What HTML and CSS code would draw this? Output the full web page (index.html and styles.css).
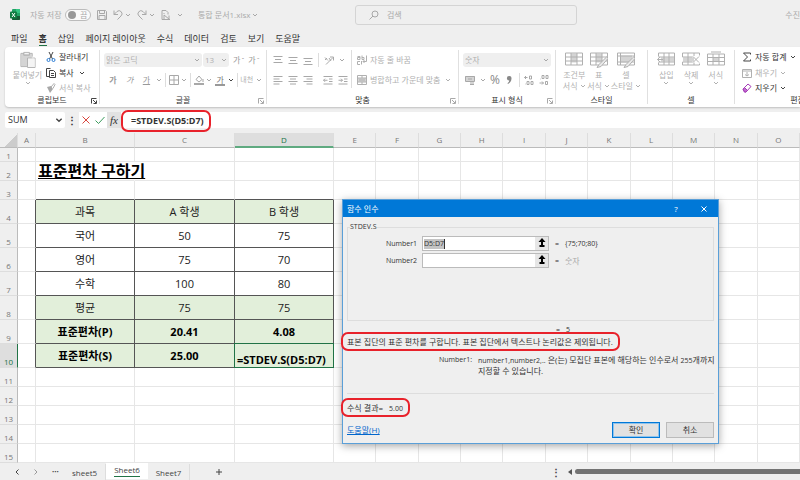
FILE: index.html
```html
<!DOCTYPE html>
<html lang="ko">
<head>
    <meta charset="UTF-8">
    <meta name="viewport" content="width=device-width, initial-scale=1.0">
    <title>통합 문서1.xlsx</title>
    <link rel="stylesheet" href="styles.css">
</head>
<body>
    <!-- 공용 아이콘 -->
    <svg class="sprite" aria-hidden="true">
        <symbol id="chev" viewBox="0 0 6 6"><path d="M1 2l2 2 2-2"/></symbol>
        <symbol id="launcher" viewBox="0 0 6 6"><path d="M.5 5.500v-5h5M2 2l3 3M5.500 2.500v3h-3"/></symbol>
        <symbol id="grid" viewBox="0 0 18 16"><path class="fill" d="M6 2h6v9H6z"/><path d="M.5 1.500h17v12H.5zM.5 5.500h17M.5 9.500h17M6 1.500v12M12 1.500v12"/></symbol>
        <symbol id="up" viewBox="0 0 8 10"><path d="M4 0L0.500 4H3v3H1.500v2h5V7H5V4h2.500z"/></symbol>
    </svg>

    <!-- 제목 표시줄 -->
    <header class="title-bar">
        <svg class="logo" viewBox="0 0 10 11"><rect x="2" width="8" height="11" rx="1" fill="#21a366"/><path d="M6 0h3a1 1 0 0 1 1 1v3H6z" fill="#33c481"/><path d="M2 7h8v3a1 1 0 0 1-1 1H3a1 1 0 0 1-1-1z" fill="#185c37"/><rect y="2.500" width="7" height="7" rx="1" fill="#107c41"/><path d="M2 4l3 4M5 4L2 8" stroke="#fff"/></svg>
        <span class="autosave">자동 저장</span>
        <button class="toggle" aria-label="자동 저장"><i></i>끔</button>
        <div class="quick">
            <svg class="icon" viewBox="0 0 10 10"><path d="M.5.500h8l1 1v8h-9zM2.500.500v3h5v-3M2 9.500v-4h6v4"/></svg>
            <svg class="icon" viewBox="0 0 10 10"><path d="M1 .5v4h4M1 4.500L4 1.500a3 3 0 0 1 4 4.500L4.500 9.500"/></svg>
            <svg class="chev"><use href="#chev"/></svg>
            <svg class="icon" viewBox="0 0 10 10"><path d="M9 .5v4H5M9 4.500L6 1.500A3 3 0 0 0 2 6l3.500 3.500"/></svg>
            <svg class="chev"><use href="#chev"/></svg>
            <svg class="icon" viewBox="0 0 10 10"><path d="M1 9.500v-9h4l2 2v2M1 9.500h8M3 9V5l5 4V5.500M3 3v1"/></svg>
            <svg class="chev"><use href="#chev"/></svg>
        </div>
        <button class="doc-name">통합 문서1.xlsx <svg class="chev"><use href="#chev"/></svg></button>
        <label class="search">
            <svg class="icon" viewBox="0 0 10 10"><circle cx="6" cy="4" r="3"/><path d="M4 6L.5 9.500"/></svg>
            <input type="text" placeholder="검색" aria-label="검색">
        </label>
        <span class="user">수진</span>
    </header>

    <!-- 리본 탭 -->
    <nav class="tabs">
        <a href="#file">파일</a>
        <a href="#home" class="active">홈</a>
        <a href="#insert">삽입</a>
        <a href="#layout">페이지 레이아웃</a>
        <a href="#formula">수식</a>
        <a href="#data">데이터</a>
        <a href="#review">검토</a>
        <a href="#view">보기</a>
        <a href="#help">도움말</a>
    </nav>

    <!-- 리본 메뉴 -->
    <section class="ribbon">
        <div class="group clipboard">
            <div class="group-body">
                <button class="big off">
                    <svg class="icon-l" viewBox="0 0 18 18"><path class="fill" d="M2 3h11v13H2z"/><path d="M5 2.500H1.500v14H8M10 2.500h3.500V6M4.500 1.500h6v3h-6zM8.500 7.500h8v10h-8z"/><path class="paper" d="M9 8h7v9H9z"/></svg>
                    붙여넣기
                    <svg class="chev"><use href="#chev"/></svg>
                </button>
                <div class="stack">
                    <button><svg class="icon dark" viewBox="0 0 10 10"><path d="M3 0l3.500 7M7 0L3.500 7"/><circle class="blue" cx="2.500" cy="8" r="1.500"/><circle class="blue" cx="7.500" cy="8" r="1.500"/></svg>잘라내기</button>
                    <button><svg class="icon dark" viewBox="0 0 10 10"><path d="M3 8.500H.5v-8h4M3.500 2.500h4l2 2v5h-6zM5 5.500h3M5 7.500h3"/></svg>복사 <svg class="chev dark far"><use href="#chev"/></svg></button>
                    <button class="off"><svg class="icon" viewBox="0 0 10 10"><path class="solid" d="M1 4l4-1 2 3-3 4z"/><path d="M5 4l3-3.500 1 1L7 5.500"/></svg>서식 복사</button>
                </div>
            </div>
            <footer>클립보드<svg class="launch dark"><use href="#launcher"/></svg></footer>
        </div>

        <div class="group font">
            <div class="group-body rows">
                <div class="row">
                    <label class="combo wide"><select aria-label="글꼴"><option>맑은 고딕</option></select><svg class="chev"><use href="#chev"/></svg></label>
                    <label class="combo size"><select aria-label="글꼴 크기"><option>13</option></select><svg class="chev"><use href="#chev"/></svg></label>
                    <button class="ga">가<sup>ˆ</sup></button>
                    <button class="ga">가<sup>ˇ</sup></button>
                </div>
                <div class="row letters">
                    <button class="ga bold">가</button>
                    <button class="ga italic">가</button>
                    <button class="ga under">가</button>
                    <svg class="chev"><use href="#chev"/></svg>
                    <i class="bar"></i>
                    <svg class="icon" viewBox="0 0 10 10"><path d="M.5.500h9v9h-9zM5 .5v9M.5 5h9"/></svg>
                    <svg class="chev"><use href="#chev"/></svg>
                    <i class="bar"></i>
                    <svg class="icon" viewBox="0 0 10 10"><path d="M2 4.500L5 1l3 3.500-3 2.500zM9 4v3"/><path class="solid" d="M0 8h10v2H0z"/></svg>
                    <svg class="chev"><use href="#chev"/></svg>
                    <button class="ga color">가</button>
                    <svg class="chev dark"><use href="#chev"/></svg>
                    <i class="bar"></i>
                    <button class="ruby">내천</button>
                    <svg class="chev"><use href="#chev"/></svg>
                </div>
            </div>
            <footer>글꼴<svg class="launch"><use href="#launcher"/></svg></footer>
        </div>

        <div class="group align">
            <div class="group-body">
                <div class="rows">
                    <div class="row">
                        <svg class="icon" viewBox="0 0 10 10"><path d="M.5 1.500h9M2 4.500h6M.5 7.500h9"/></svg>
                        <svg class="icon" viewBox="0 0 10 10"><path d="M.5 2.500h9M2 5.500h6M.5 8.500h9"/></svg>
                        <svg class="icon" viewBox="0 0 10 10"><path d="M.5 3.500h9M2 6.500h6M.5 9.500h9"/></svg>
                        <i class="bar"></i>
                        <svg class="icon" viewBox="0 0 10 10"><path d="M2 9.500l7-7M6 2h3.500v3.500M1 2.500l3 3M1 5l2-2M5 3l2 3"/></svg>
                        <svg class="chev"><use href="#chev"/></svg>
                    </div>
                    <div class="row">
                        <svg class="icon" viewBox="0 0 10 10"><path d="M.5 1.500h9M.5 4h6M.5 6.500h9M.5 9h6"/></svg>
                        <svg class="icon" viewBox="0 0 10 10"><path d="M.5 1.500h9M2 4h6M.5 6.500h9M2 9h6"/></svg>
                        <svg class="icon" viewBox="0 0 10 10"><path d="M.5 1.500h9M3.500 4h6M.5 6.500h9M3.500 9h6"/></svg>
                        <i class="bar"></i>
                        <svg class="icon" viewBox="0 0 10 10"><path d="M.5 1.500h9M6 4h3.500M6 6.500h3.500M.5 9h9M4.500 5.250h-4M2 3.700L.5 5.250 2 6.800"/></svg>
                        <svg class="icon" viewBox="0 0 10 10"><path d="M.5 1.500h9M6 4h3.500M6 6.500h3.500M.5 9h9M.5 5.250h4M3 3.700l1.500 1.550L3 6.800"/></svg>
                    </div>
                </div>
                <i class="bar tall"></i>
                <div class="rows">
                    <button class="off"><svg class="icon" viewBox="0 0 10 10"><path d="M.5 1.500H3v3H.5v-2H3M5 .5v4h2v-2H5M9.500.500v6H6M7.500 5L6 6.500 7.500 8M3 6.500H.5v3H3M4.500 6v3.500"/></svg>자동 줄 바꿈</button>
                    <button class="off"><svg class="icon" viewBox="0 0 10 10"><path class="fill" d="M1 3h8v4H1z"/><path d="M.5.500h9v9h-9zM.5 3h9M.5 7h9M5 .5V3M5 7v2.500M2 5h6"/></svg>병합하고 가운데 맞춤 <svg class="chev far"><use href="#chev"/></svg></button>
                </div>
            </div>
            <footer>맞춤<svg class="launch"><use href="#launcher"/></svg></footer>
        </div>

        <div class="group number">
            <div class="group-body rows">
                <label class="combo full"><select aria-label="표시 형식"><option>숫자</option></select><svg class="chev"><use href="#chev"/></svg></label>
                <div class="row">
                    <svg class="icon" viewBox="0 0 10 10"><path class="fill" d="M0 1h10v5H0z"/><path d="M.5 1.500h9v5h-9zM3 4h4M5 8h4M5 9.500h4"/></svg>
                    <svg class="chev"><use href="#chev"/></svg>
                    <button class="sign">%</button>
                    <button aria-label="쉼표 스타일"><svg class="icon" viewBox="0 0 10 10"><path class="comma" d="M5 1a2.300 2.300 0 0 1 2.500 2.500C7.500 6 6 8 4 9l-.5-.8C4.600 7.400 5.200 6.500 5.300 5.500A2.200 2.200 0 0 1 5 1z"/></svg></button>
                    <i class="bar"></i>
                    <button class="dec" aria-label="자릿수 늘림"><svg class="icon" viewBox="0 0 10 10"><path d="M3.500 2.500h-3M2 1L.5 2.500 2 4M5.500 1h2v3h-2zM1 9h.5M3 6.500h2v3H3zM7 6.500h2v3H7z"/></svg></button>
                    <button class="dec" aria-label="자릿수 줄임"><svg class="icon" viewBox="0 0 10 10"><path d="M1 4h.5M3 .5h2v3H3zM7 .5h2v3H7zM.5 8h4M3 6.500L4.500 8 3 9.500M6.500 6.500h2v3h-2z"/></svg></button>
                </div>
            </div>
            <footer>표시 형식<svg class="launch"><use href="#launcher"/></svg></footer>
        </div>

        <div class="group styles">
            <div class="group-body">
                <button class="big off"><svg class="icon-l" viewBox="0 0 18 16"><use href="#grid" width="18" height="16"/></svg>조건부<span>서식 <svg class="chev"><use href="#chev"/></svg></span></button>
                <button class="big off"><svg class="icon-l" viewBox="0 0 18 16"><use href="#grid" width="18" height="16"/><path class="brush" d="M17 5l-8 8-2 3 4-1 7-8z"/></svg>표<span>서식 <svg class="chev"><use href="#chev"/></svg></span></button>
                <button class="big off"><svg class="icon-l" viewBox="0 0 18 16"><path class="fill" d="M3 4h12v7H3z"/><path d="M.5 1.500h17v12H.5zM.5 4.500h17M.5 10.500h17M3.500 1.500v12"/><path class="brush" d="M17 5l-8 8-2 3 4-1 7-8z"/></svg>셀<span>스타일 <svg class="chev"><use href="#chev"/></svg></span></button>
            </div>
            <footer>스타일</footer>
        </div>

        <div class="group cells">
            <div class="group-body">
                <button class="big off"><svg class="icon-l" viewBox="0 0 18 16"><path class="fill" d="M4 6h14v4H4z"/><path d="M1.500 5V1.500h16v12h-16V11M1.500 5.500h16M1.500 10.500h16M7 1.500v12M12 1.500v12M6 8H.5M3 5.500L.5 8 3 10.500"/></svg>삽입<svg class="chev"><use href="#chev"/></svg></button>
                <button class="big off"><svg class="icon-l" viewBox="0 0 18 16"><path class="fill" d="M1 6h11v4H1z"/><path d="M17.500 4V1.500H.5v4h10M.5 10.500v3h17V12M.5 10.500h10M6 1.500v12M12 1.500v3M12 11v2.500M11 5l6 6M17 5l-6 6"/></svg>삭제<svg class="chev"><use href="#chev"/></svg></button>
                <button class="big off"><svg class="icon-l" viewBox="0 0 18 16"><path class="fill" d="M6 6h6v4H6z"/><path d="M4 .5h10M.5 2.500h17v11H.5zM.5 6h17M.5 10h17M6 2.500v11M12 2.500v11"/></svg>서식<svg class="chev"><use href="#chev"/></svg></button>
            </div>
            <footer>셀</footer>
        </div>

        <div class="group edit">
            <div class="group-body">
                <div class="stack">
                    <button><svg class="icon dark" viewBox="0 0 10 10"><path d="M8.500 2.500V1h-7l4 4-4 4h7V7.500"/></svg>자동 합계 <svg class="chev dark"><use href="#chev"/></svg></button>
                    <button class="off"><svg class="icon" viewBox="0 0 10 10"><path d="M.5 1.500h9v8h-9zM.5 3h9M5 4v4M3 6.500l2 1.500 2-1.500"/></svg>채우기<svg class="chev"><use href="#chev"/></svg></button>
                    <button><svg class="icon" viewBox="0 0 10 10"><path class="eraser" d="M1 6l5-5 3 2.500-5 5.500H2.500z"/><path class="eraser-end" d="M1 6l1.500-1.500 3 3L4 9H2.500z"/></svg>지우기<svg class="chev dark"><use href="#chev"/></svg></button>
                </div>
            </div>
            <footer>편집</footer>
        </div>
    </section>

    <!-- 수식 입력줄 -->
    <section class="formula-bar">
        <label class="name-box"><select aria-label="이름 상자"><option>SUM</option></select><svg class="chev dark"><use href="#chev"/></svg></label>
        <span class="dots">⋮</span>
        <div class="formula-buttons">
            <button aria-label="취소"><svg class="icon red" viewBox="0 0 10 10"><path d="M1.500 1.500l7 7M8.500 1.500l-7 7"/></svg></button>
            <button aria-label="입력"><svg class="icon green" viewBox="0 0 10 10"><path d="M.5 5.500l3 3 6-6.500"/></svg></button>
            <button class="fx">fx</button>
        </div>
        <div class="formula">
            <input type="text" value="=STDEV.S(D5:D7)" aria-label="수식">
            <span class="mark"></span>
        </div>
    </section>

    <!-- 워크시트 -->
    <main class="sheet">
        <table class="grid">
            <colgroup>
                <col class="c-head"><col class="c-a"><col class="c-data"><col class="c-c"><col class="c-data">
                <col span="11">
            </colgroup>
            <thead>
                <tr><th class="corner"></th><th>A</th><th>B</th><th>C</th><th class="on">D</th><th>E</th><th>F</th><th>G</th><th>H</th><th>I</th><th>J</th><th>K</th><th>L</th><th>M</th><th>N</th><th>O</th></tr>
            </thead>
            <tbody>
                <tr class="first"><th>1</th><td></td><td></td><td></td><td></td><td></td><td></td><td></td><td></td><td></td><td></td><td></td><td></td><td></td><td></td><td></td></tr>
                <tr><th>2</th><td></td><td class="heading">표준편차 구하기</td><td></td><td></td><td></td><td></td><td></td><td></td><td></td><td></td><td></td><td></td><td></td><td></td><td></td></tr>
                <tr class="before"><th>3</th><td></td><td></td><td></td><td></td><td></td><td></td><td></td><td></td><td></td><td></td><td></td><td></td><td></td><td></td><td></td></tr>
                <tr class="data shade"><th>4</th><td></td><td>과목</td><td>A 학생</td><td>B 학생</td><td></td><td></td><td></td><td></td><td></td><td></td><td></td><td></td><td></td><td></td><td></td></tr>
                <tr class="data"><th>5</th><td></td><td>국어</td><td>50</td><td>75</td><td></td><td></td><td></td><td></td><td></td><td></td><td></td><td></td><td></td><td></td><td></td></tr>
                <tr class="data"><th>6</th><td></td><td>영어</td><td>75</td><td>70</td><td></td><td></td><td></td><td></td><td></td><td></td><td></td><td></td><td></td><td></td><td></td></tr>
                <tr class="data"><th>7</th><td></td><td>수학</td><td>100</td><td>80</td><td></td><td></td><td></td><td></td><td></td><td></td><td></td><td></td><td></td><td></td><td></td></tr>
                <tr class="data shade"><th>8</th><td></td><td>평균</td><td>75</td><td>75</td><td></td><td></td><td></td><td></td><td></td><td></td><td></td><td></td><td></td><td></td><td></td></tr>
                <tr class="data shade strong"><th>9</th><td></td><td>표준편차(P)</td><td>20.41</td><td>4.08</td><td></td><td></td><td></td><td></td><td></td><td></td><td></td><td></td><td></td><td></td><td></td></tr>
                <tr class="data shade strong"><th class="on">10</th><td></td><td>표준편차(S)</td><td>25.00</td><td class="editing">=STDEV.S(D5:D7)</td><td></td><td></td><td></td><td></td><td></td><td></td><td></td><td></td><td></td><td></td><td></td></tr>
                <tr><th>11</th><td></td><td></td><td></td><td></td><td></td><td></td><td></td><td></td><td></td><td></td><td></td><td></td><td></td><td></td><td></td></tr>
                <tr><th>12</th><td></td><td></td><td></td><td></td><td></td><td></td><td></td><td></td><td></td><td></td><td></td><td></td><td></td><td></td><td></td></tr>
                <tr><th>13</th><td></td><td></td><td></td><td></td><td></td><td></td><td></td><td></td><td></td><td></td><td></td><td></td><td></td><td></td><td></td></tr>
                <tr><th>14</th><td></td><td></td><td></td><td></td><td></td><td></td><td></td><td></td><td></td><td></td><td></td><td></td><td></td><td></td><td></td></tr>
                <tr><th>15</th><td></td><td></td><td></td><td></td><td></td><td></td><td></td><td></td><td></td><td></td><td></td><td></td><td></td><td></td><td></td></tr>
            </tbody>
        </table>

        <!-- 함수 인수 대화상자 -->
        <div class="dialog" role="dialog" aria-labelledby="dialogTitle">
            <div class="dialog-title">
                <span id="dialogTitle">함수 인수</span>
                <button aria-label="도움말">?</button>
                <button aria-label="닫기"><svg class="icon-s" viewBox="0 0 6 6"><path d="M.5.500l5 5M5.500.500l-5 5"/></svg></button>
            </div>
            <div class="dialog-body">
                <fieldset>
                    <legend>STDEV.S</legend>
                    <div class="arg">
                        <label for="num1">Number1</label>
                        <div class="ref"><span class="ref-text"><input id="num1" type="text" value="D5:D7"></span><button aria-label="범위 선택"><svg><use href="#up"/></svg></button></div>
                        <span class="eq">=</span><span>{75;70;80}</span>
                    </div>
                    <div class="arg">
                        <label for="num2">Number2</label>
                        <div class="ref"><span class="ref-text"><input id="num2" type="text"></span><button aria-label="범위 선택"><svg><use href="#up"/></svg></button></div>
                        <span class="eq">=</span><span class="hint">숫자</span>
                    </div>
                </fieldset>
                <div class="value"><span class="eq">=</span><span>5</span></div>
                <p class="ring">표본 집단의 표준 편차를 구합니다. 표본 집단에서 텍스트나 논리값은 제외됩니다.</p>
                <div class="arg-help">
                    <span>Number1:</span>
                    <p><small>number1,number2,..</small> 은(는) 모집단 표본에 해당하는 인수로서 <small>255</small>개까지<br>지정할 수 있습니다.</p>
                </div>
                <p class="ring result">수식 결과=<span>5.00</span></p>
                <div class="dialog-foot">
                    <a href="#help">도움말(H)</a>
                    <button class="primary">확인</button>
                    <button>취소</button>
                </div>
            </div>
        </div>
    </main>

    <!-- 시트 탭 -->
    <footer class="sheet-bar">
        <button class="nav-btn" aria-label="이전 시트"><svg class="icon-s" viewBox="0 0 6 6"><path d="M4.500.500L2 3l2.500 2.500"/></svg></button>
        <button class="nav-btn pale" aria-label="다음 시트"><svg class="icon-s" viewBox="0 0 6 6"><path d="M1.500.500L4 3 1.500 5.500"/></svg></button>
        <span class="more">•••</span>
        <a href="#sheet5">sheet5</a>
        <a href="#sheet6" class="active"><span>Sheet6</span></a>
        <a href="#sheet7">Sheet7</a>
        <button class="add" aria-label="새 시트"><svg class="icon-s" viewBox="0 0 6 6"><path d="M3 0v6M0 3h6"/></svg></button>
        <div class="scroll"><span class="dots">⋮</span><i class="arrow"></i><i class="thumb"></i></div>
    </footer>
</body>
</html>
```
FILE: styles.css
```css
* {
    margin: 0;
    padding: 0;
    box-sizing: border-box;
}

body {
    display: flex;
    flex-direction: column;
    height: 100vh;
    overflow: hidden;
    background-color: #efefef;
    color: #333;
    font-family: "Open Sans", "Noto Sans CJK KR", sans-serif;
    font-size: 8px;
    line-height: 10px;
    white-space: nowrap;
}

button, input, select {
    border: 0;
    background: none;
    color: inherit;
    font: inherit;
    outline: 0;
    white-space: nowrap;
}

a {
    color: inherit;
    text-decoration: none;
}

select {
    appearance: none;
}

/* 아이콘 */
.sprite {
    position: absolute;
    width: 0;
    height: 0;
}

svg {
    flex: none;
    fill: none;
    stroke: #a8a8a8;
}

.icon {
    width: 10px;
    height: 10px;
}

.icon-l {
    width: 18px;
    height: 17px;
}

.icon-s, .chev, .launch {
    width: 6px;
    height: 6px;
}

.dark {
    stroke: #444;
}

.red {
    stroke: #d9453d;
}

.green {
    stroke: #3a9a5b;
}

.fill {
    fill: #d4d4d4;
    stroke: none;
}

.solid {
    fill: #a8a8a8;
    stroke: none;
}

.comma {
    fill: #888;
    stroke: none;
}

.paper {
    fill: #f4f4f4;
    stroke: none;
}

.brush {
    fill: #e8e8e8;
}

.blue {
    stroke: #2b7cd3;
}

.eraser {
    stroke: #a33bb5;
}

.eraser-end {
    fill: #c26bd0;
    stroke: #a33bb5;
}

/* 제목 표시줄 */
.title-bar {
    display: flex;
    flex: none;
    align-items: center;
    height: 29px;
    padding-left: 10px;
    color: #aaa;
}

.logo {
    width: 10px;
    height: 11px;
    stroke: none;
    margin-right: 10px;
}

.autosave {
    width: 35px;
}

.toggle {
    display: flex;
    align-items: center;
    gap: 4px;
    width: 26px;
    height: 12px;
    padding-left: 2px;
    border: 1px solid #bbb;
    border-radius: 6px;
    background-color: #fafafa;
}

.toggle i {
    width: 8px;
    height: 8px;
    border-radius: 50%;
    background-color: #999;
}

.quick {
    display: flex;
    align-items: center;
    gap: 6px;
    width: 101px;
    margin-left: 6px;
}

.quick .chev:not(:last-child) {
    margin-left: -4px;
}

.doc-name {
    display: flex;
    align-items: center;
    gap: 2px;
    width: 157px;
}

.search {
    display: flex;
    align-items: center;
    gap: 8px;
    width: 222px;
    height: 20px;
    padding-left: 13px;
    border: 1px solid #d4d4d4;
    border-radius: 3px;
}

.search input {
    width: 100%;
}

.search input::placeholder {
    color: #aaa;
}

.user {
    margin-left: auto;
}

/* 리본 탭 */
.tabs {
    display: flex;
    flex: none;
    gap: 11px;
    height: 18px;
    padding: 2px 0 0 11px;
    font-size: 9px;
    line-height: 15px;
}

.tabs a {
    height: 15px;
}

.tabs .active {
    border-bottom: 1px solid #217346;
    font-weight: bold;
}

/* 리본 메뉴 */
.ribbon {
    display: flex;
    flex: none;
    height: 60px;
    margin-left: 5px;
    padding: 3px 0;
    overflow: hidden;
    border-radius: 4px 0 0 4px;
    background-color: #fff;
    box-shadow: 0 1px 2px rgba(0, 0, 0, 0.2);
}

.group {
    display: flex;
    flex: none;
    flex-direction: column;
    padding: 0 4px;
    border-right: 1px solid #e0e0e0;
}

.group-body {
    display: flex;
    flex: 1;
}

.group button {
    display: flex;
    align-items: center;
    gap: 3px;
}

.group footer {
    position: relative;
    line-height: 8px;
    text-align: center;
}

.launch {
    position: absolute;
    right: -2px;
    bottom: 0;
}

.clipboard { width: 95px; }
.font { width: 167px; }
.align { width: 192px; }
.number { width: 97px; }
.styles { width: 92px; }
.cells { width: 87px; }
.edit { width: 126px; }

.group .big {
    flex: 1;
    flex-direction: column;
    gap: 0;
    line-height: 11px;
    padding-top: 1px;
}

.off, .row, .combo {
    color: #b0b0b0;
}

.off svg {
    stroke: #b0b0b0;
}

.big .icon-l {
    margin-bottom: 1px;
}

.stack {
    display: flex;
    flex-direction: column;
    justify-content: space-between;
    padding: 1px 0 2px;
}

.clipboard .stack {
    width: 49px;
}

.stack button {
    line-height: 12px;
}

.far {
    margin-left: 2px;
}

.rows {
    display: flex;
    flex-direction: column;
    gap: 6px;
    padding-top: 3px;
}

.row {
    display: flex;
    align-items: center;
    height: 14px;
}

.rows > button {
    height: 14px;
}

.bar {
    width: 1px;
    height: 14px;
    background-color: #ddd;
}

.bar.tall {
    height: 38px;
}

.combo {
    display: flex;
    position: relative;
    height: 14px;
    border-radius: 3px;
    background-color: #efefef;
}

.combo select {
    width: 100%;
    padding-left: 2px;
}

.combo .chev {
    position: absolute;
    right: 2px;
    top: 4px;
}

.wide { width: 98px; }
.size { width: 26px; }

.font .row {
    gap: 1px;
}

.group .ga {
    gap: 1px;
    color: #999;
    padding-left: 3px;
}

.ga sup {
    font-size: 7px;
    line-height: 7px;
}

.font .letters {
    justify-content: space-between;
    gap: 0;
    padding-left: 2px;
}

.letters .ga {
    justify-content: center;
    width: 14px;
    padding-left: 0;
}

.bold { font-weight: bold; }
.italic { font-style: italic; }
.under { text-decoration: underline; }

.letters .color {
    width: 10px;
    color: #777;
    border-bottom: 2px solid #999;
    line-height: 9px;
}

.ruby {
    font-size: 7px;
}

.align .group-body {
    gap: 5px;
    padding-left: 2px;
}

.align .row {
    gap: 5px;
}

.align .rows:first-child {
    width: 73px;
}

.number .row {
    justify-content: space-between;
    padding: 0 2px;
}

.sign {
    font-size: 12px;
    color: #888;
}

.styles .group-body, .cells .group-body {
    padding: 0 2px;
}

.edit .group-body {
    padding-left: 3px;
}

/* 수식 입력줄 */
.formula-bar {
    display: flex;
    flex: none;
    align-items: center;
    height: 16px;
    margin: 5px 0 5px 5px;
    font-size: 9px;
}

.name-box {
    display: flex;
    align-items: center;
    width: 60px;
    height: 16px;
    padding-right: 2px;
    border-radius: 2px;
    background-color: #fff;
}

.name-box select {
    flex: 1;
    padding-left: 3px;
}

.name-box .chev {
    width: 8px;
    height: 8px;
}

.dots {
    width: 14px;
    font-size: 10px;
    font-weight: bold;
    text-align: center;
}

.formula-buttons {
    display: flex;
    width: 42px;
    height: 16px;
    background-color: #fff;
}

.formula-buttons button {
    display: flex;
    flex: 1;
    align-items: center;
    justify-content: center;
}

.formula-buttons .fx {
    background-color: #e2e2e2;
    font-family: "Liberation Serif", serif;
    font-size: 11px;
    font-style: italic;
}

.formula {
    position: relative;
    flex: 1;
    height: 16px;
    background-color: #fff;
}

.formula input {
    width: 100%;
    height: 16px;
    padding-left: 10px;
    font-weight: bold;
}

/* 수식을 강조하는 빨간 테두리 */
.mark {
    position: absolute;
    left: 0;
    top: -2px;
    z-index: 2;
    width: 90px;
    height: 22px;
    border: 2px solid #e8222b;
    border-radius: 7px;
}

/* 워크시트 */
.sheet {
    position: relative;
    flex: 1;
    min-height: 0;
    background-color: #fff;
}

.grid {
    width: 100%;
    table-layout: fixed;
    border-collapse: separate;
    border-spacing: 0;
}

.c-head { width: 18px; }
.c-a { width: 18px; }
.c-data { width: 99px; }
.c-c { width: 100px; }

.grid th {
    border-right: 1px solid #ddd;
    border-bottom: 1px solid #ddd;
    background-color: #efefef;
    color: #777;
    font-weight: normal;
    line-height: 10px;
}

.grid thead th {
    height: 15px;
    border-bottom-color: #bbb;
}

.grid tbody th {
    border-right-color: #bbb;
    vertical-align: bottom;
}

.grid .on {
    background-color: #dedede;
    color: #217346;
}

.grid thead .on {
    border-bottom: 2px solid #5faa80;
}

.grid tbody .on {
    border-right: 1px solid #217346;
}

.grid .corner {
    background-image: linear-gradient(135deg, transparent 60%, #ccc 60%);
}

.grid td {
    height: 19px;
    border-right: 1px solid #e6e6e6;
    border-bottom: 1px solid #e6e6e6;
}

.grid .first td {
    height: 14px;
}

.grid .heading {
    border-right-color: #fff;
    color: #000;
    font-size: 16px;
    font-weight: bold;
    line-height: 18px;
    text-decoration: underline;
    padding-left: 2px;
}

.before td:nth-child(n+3):nth-child(-n+5) {
    border-bottom-color: #555;
}

.data td {
    height: 24px;
    color: #222;
    font-size: 11px;
    line-height: 14px;
    text-align: center;
}

.data td:nth-child(2) {
    border-right-color: #555;
}

.data td:nth-child(n+3):nth-child(-n+5) {
    border-right-color: #555;
    border-bottom-color: #555;
}

.shade td:nth-child(n+3):nth-child(-n+5) {
    background-color: #e2efda;
}

.strong td {
    color: #000;
    font-weight: bold;
}

.data .editing {
    position: relative;
    padding-top: 8px;
    padding-left: 2px;
    text-align: left;
}

.editing::after {
    content: "";
    position: absolute;
    inset: -1px;
    border: 1px solid #217346;
}

/* 함수 인수 대화상자 */
.dialog {
    position: absolute;
    left: 342px;
    top: 66px;
    width: 377px;
    border: 1px solid #5a9fd8;
    background-color: #efefef;
    box-shadow: 0 2px 8px rgba(0, 0, 0, 0.35);
}

.dialog-title {
    display: flex;
    align-items: center;
    height: 17px;
    padding-left: 4px;
    background-color: #0078d7;
    color: #fff;
}

.dialog-title span {
    flex: 1;
}

.dialog-title button {
    width: 28px;
}

.dialog-title svg {
    stroke: #fff;
}

.dialog-body {
    padding: 5px 4px;
}

fieldset {
    height: 99px;
    border: 1px solid #ddd;
}

legend {
    margin-bottom: 4px;
    margin-left: 2px;
    font-size: 7px;
}

.arg {
    display: flex;
    align-items: center;
    margin-bottom: 2px;
}

.arg label {
    width: 69px;
    margin-right: 5px;
    font-size: 7px;
    text-align: right;
}

.arg > span {
    font-size: 7px;
}

.arg > .hint {
    color: #aaa;
    font-size: 8px;
}

.ref {
    display: flex;
    width: 127px;
    height: 15px;
    border: 1px solid #bbb;
    background-color: #fff;
}

.ref-text {
    display: flex;
    flex: 1;
    align-items: center;
    padding-left: 1px;
}

.ref input {
    width: 100%;
    height: 10px;
}

/* 선택된 텍스트 */
#num1 {
    width: 21px;
    border-right: 1px solid #333;
    background-color: #c4c4c4;
    font-size: 7px;
}

.ref button {
    width: 13px;
    background-color: #e6e6e6;
}

.ref svg {
    width: 8px;
    height: 10px;
    fill: #000;
    stroke: none;
}

.eq {
    width: 16px;
    padding-left: 6px;
}

.value {
    display: flex;
    height: 11px;
    margin-left: 203px;
    padding-top: 4px;
    font-size: 7px;
}

.ring {
    position: relative;
    width: max-content;
    height: 19px;
    margin-left: -6px;
    padding: 0 5px 0 4px;
    border: 2px solid #e8222b;
    border-radius: 7px;
    background-color: #efefef;
    line-height: 16px;
}

.arg-help {
    display: flex;
    gap: 6px;
    height: 43px;
    padding-top: 4px;
    border-bottom: 1px solid #ddd;
}

.arg-help span {
    flex: none;
    width: 125px;
    font-size: 7px;
    text-align: right;
}

.arg-help small {
    font-size: 7px;
}

.result {
    margin-top: 4px;
}

.result span {
    margin-left: 6px;
    font-size: 7px;
}

.dialog-foot {
    display: flex;
    align-items: center;
    gap: 6px;
    margin-top: 5px;
}

.dialog-foot a {
    flex: 1;
    color: #0066cc;
    text-decoration: underline;
}

.dialog-foot button {
    width: 48px;
    height: 16px;
    border: 1px solid #bbb;
    background-color: #e1e1e1;
}

.dialog-foot .primary {
    border: 1px solid #0078d7;
    outline: 1px solid #8fc3ec;
    outline-offset: -2px;
}

/* 시트 탭 */
.sheet-bar {
    display: flex;
    flex: none;
    align-items: center;
    height: 17px;
    padding-left: 14px;
    color: #444;
}

.sheet-bar svg {
    stroke: #444;
}

.nav-btn {
    display: flex;
    width: 19px;
}

.sheet-bar .pale svg {
    stroke: #999;
}

.more {
    width: 12px;
    font-size: 6px;
}

.sheet-bar a {
    width: 42px;
    height: 16px;
    line-height: 17px;
    border-right: 1px solid #ddd;
    text-align: center;
}

.sheet-bar .active {
    align-self: flex-start;
    border: 0;
    background-color: #fff;
    line-height: 13px;
}

.active span {
    display: inline-block;
    border-bottom: 1px solid #217346;
}

.add {
    display: flex;
    margin-left: 26px;
}

.scroll {
    display: flex;
    align-items: center;
    width: calc(100% - 535px);
    margin-left: auto;
}

.arrow {
    margin-right: 3px;
    margin-left: 5px;
    border: 3px solid transparent;
    border-right: 4px solid #555;
    border-left: 0;
}

.thumb {
    flex: 1;
    height: 5px;
    border-radius: 3px 0 0 3px;
    background-color: #737373;
}
```
